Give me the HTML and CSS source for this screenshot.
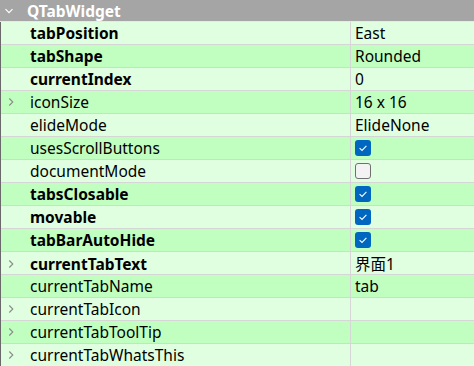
FILE: index.html
```html
<!DOCTYPE html>
<html>
<head>
<meta charset="utf-8">
<link rel="stylesheet" href="styles.css">
</head>
<body>
<div class="tree">
  <div class="header">
    <span class="arrow"><svg width="10" height="10" viewBox="0 0 10 10"><path d="M1.5 3.2 L5 6.7 L8.5 3.2" fill="none" stroke="#fff" stroke-width="1.2"/></svg></span>
    <span class="htext">QTabWidget</span>
  </div>
  <div class="rows">
    <div class="row a"><div class="name b"><span class="arrow"></span>tabPosition</div><div class="val">East</div></div>
    <div class="row c"><div class="name b"><span class="arrow"></span>tabShape</div><div class="val">Rounded</div></div>
    <div class="row a"><div class="name b"><span class="arrow"></span>currentIndex</div><div class="val">0</div></div>
    <div class="row c"><div class="name"><span class="arrow"><svg width="10" height="10" viewBox="0 0 10 10"><path d="M3.3 1.5 L6.8 5 L3.3 8.5" fill="none" stroke="#8a8a8a" stroke-width="1.1"/></svg></span>iconSize</div><div class="val">16 x 16</div></div>
    <div class="row a"><div class="name"><span class="arrow"></span>elideMode</div><div class="val">ElideNone</div></div>
    <div class="row c"><div class="name"><span class="arrow"></span>usesScrollButtons</div><div class="val"><span class="cb on"><svg width="16" height="16" viewBox="0 0 16 16"><path d="M4.6 8.2 L7 10.4 L11.4 5.8" fill="none" stroke="#fff" stroke-width="1.1"/></svg></span></div></div>
    <div class="row a"><div class="name"><span class="arrow"></span>documentMode</div><div class="val"><span class="cb off"></span></div></div>
    <div class="row c"><div class="name b"><span class="arrow"></span>tabsClosable</div><div class="val"><span class="cb on"><svg width="16" height="16" viewBox="0 0 16 16"><path d="M4.6 8.2 L7 10.4 L11.4 5.8" fill="none" stroke="#fff" stroke-width="1.1"/></svg></span></div></div>
    <div class="row a"><div class="name b"><span class="arrow"></span>movable</div><div class="val"><span class="cb on"><svg width="16" height="16" viewBox="0 0 16 16"><path d="M4.6 8.2 L7 10.4 L11.4 5.8" fill="none" stroke="#fff" stroke-width="1.1"/></svg></span></div></div>
    <div class="row c"><div class="name b"><span class="arrow"></span>tabBarAutoHide</div><div class="val"><span class="cb on"><svg width="16" height="16" viewBox="0 0 16 16"><path d="M4.6 8.2 L7 10.4 L11.4 5.8" fill="none" stroke="#fff" stroke-width="1.1"/></svg></span></div></div>
    <div class="row a"><div class="name b"><span class="arrow"><svg width="10" height="10" viewBox="0 0 10 10"><path d="M3.3 1.5 L6.8 5 L3.3 8.5" fill="none" stroke="#8a8a8a" stroke-width="1.1"/></svg></span>currentTabText</div><div class="val">界面1</div></div>
    <div class="row c"><div class="name"><span class="arrow"></span>currentTabName</div><div class="val">tab</div></div>
    <div class="row a"><div class="name"><span class="arrow"><svg width="10" height="10" viewBox="0 0 10 10"><path d="M3.3 1.5 L6.8 5 L3.3 8.5" fill="none" stroke="#8a8a8a" stroke-width="1.1"/></svg></span>currentTabIcon</div><div class="val"></div></div>
    <div class="row c"><div class="name"><span class="arrow"><svg width="10" height="10" viewBox="0 0 10 10"><path d="M3.3 1.5 L6.8 5 L3.3 8.5" fill="none" stroke="#8a8a8a" stroke-width="1.1"/></svg></span>currentTabToolTip</div><div class="val"></div></div>
    <div class="row a"><div class="name"><span class="arrow"><svg width="10" height="10" viewBox="0 0 10 10"><path d="M3.3 1.5 L6.8 5 L3.3 8.5" fill="none" stroke="#8a8a8a" stroke-width="1.1"/></svg></span>currentTabWhatsThis</div><div class="val"></div></div>
  </div>
</div>
</body>
</html>
```
FILE: styles.css
```css
html, body {
  margin: 0;
  padding: 0;
  background: #ffffff;
}
.tree {
  width: 474px;
  height: 366px;
  overflow: hidden;
  font-family: "Noto Sans", "Noto Sans CJK SC", sans-serif;
  font-size: 15.5px;
  color: #000;
}
.header {
  height: 21px;
  background: #a5a5a5;
  border-bottom: 1px solid #e8e8e8;
  display: flex;
  align-items: center;
  color: #fff;
  font-weight: bold;
}
.header .arrow {
  width: 27px;
  padding-left: 4px;
  box-sizing: border-box;
  display: flex;
  align-items: center;
}
.rows {
  border-left: 1px solid #6a6a6a;
}
.row {
  display: grid;
  grid-template-columns: 350px 1fr;
  height: 22px;
  border-bottom: 1px solid #d6d6d6;
}
.row.a { background: #e0ffe0; }
.row.c { background: #c0ffc0; }
.name {
  display: flex;
  align-items: center;
  border-right: 1px solid #d6d6d6;
  white-space: nowrap;
}
.name.b { font-weight: bold; }
.name .arrow {
  width: 29px;
  padding-left: 5px;
  box-sizing: border-box;
  display: flex;
  align-items: center;
}
.val {
  display: flex;
  align-items: center;
  padding-left: 4px;
}
.cb {
  width: 16px;
  height: 16px;
  box-sizing: border-box;
  border-radius: 3px;
  display: block;
}
.cb svg { display: block; }
.cb.on { background: #0067c0; }
.cb.off { background: #f3f3f3; border: 1px solid #707070; }
```
